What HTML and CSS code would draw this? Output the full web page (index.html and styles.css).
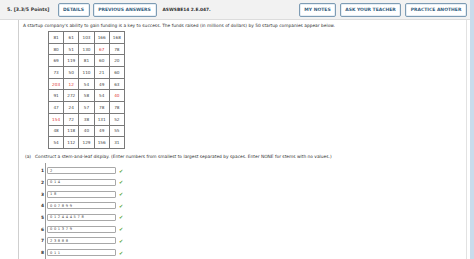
FILE: index.html
```html
<!DOCTYPE html>
<html>
<head>
<meta charset="utf-8">
<link rel="stylesheet" href="styles.css">
</head>
<body>
<div class="page">
  <div class="main">
    <div class="header">
      <span class="qnum">5. [3.3/5 Points]</span>
      <span class="btn btn-details">DETAILS</span>
      <span class="btn btn-prev">PREVIOUS ANSWERS</span>
      <span class="code">ASWSBE14 2.E.047.</span>
      <span class="spacer"></span>
      <span class="btn btn-notes">MY NOTES</span>
      <span class="btn btn-ask">ASK YOUR TEACHER</span>
      <span class="btn btn-practice">PRACTICE ANOTHER</span>
    </div>
    <div class="content">
      <p class="intro">A startup company's ability to gain funding is a key to success. The funds raised (in millions of dollars) by 50 startup companies appear below.</p>
      <table class="data">
        <tr><td>81</td><td>61</td><td>103</td><td>166</td><td>168</td></tr>
        <tr><td>80</td><td>51</td><td>130</td><td class="red">67</td><td>78</td></tr>
        <tr><td>69</td><td>119</td><td>81</td><td>60</td><td>20</td></tr>
        <tr><td>73</td><td>50</td><td>110</td><td>21</td><td>60</td></tr>
        <tr><td class="red">203</td><td class="red">12</td><td>54</td><td>49</td><td>63</td></tr>
        <tr><td>91</td><td>272</td><td>58</td><td>54</td><td class="red">40</td></tr>
        <tr><td>47</td><td>24</td><td>57</td><td>78</td><td>78</td></tr>
        <tr><td class="red">154</td><td>72</td><td>38</td><td>131</td><td>52</td></tr>
        <tr><td>48</td><td>118</td><td>40</td><td>49</td><td>55</td></tr>
        <tr><td>54</td><td>112</td><td>129</td><td>156</td><td>31</td></tr>
      </table>
      <p class="part"><span class="plabel">(a)</span>Construct a stem-and-leaf display. (Enter numbers from smallest to largest separated by spaces. Enter NONE for stems with no values.)</p>
      <div class="stemleaf">
        <div class="stems">
          <div class="stem">1</div>
          <div class="stem">2</div>
          <div class="stem">3</div>
          <div class="stem">4</div>
          <div class="stem">5</div>
          <div class="stem">6</div>
          <div class="stem">7</div>
          <div class="stem">8</div>
        </div>
        <div class="leaves">
          <div class="leaf"><span class="box">2</span><span class="check">&#10004;</span></div>
          <div class="leaf"><span class="box">0 1 4</span><span class="check">&#10004;</span></div>
          <div class="leaf"><span class="box">1 8</span><span class="check">&#10004;</span></div>
          <div class="leaf"><span class="box">0 0 7 8 9 9</span><span class="check">&#10004;</span></div>
          <div class="leaf"><span class="box">0 1 2 4 4 4 5 7 8</span><span class="check">&#10004;</span></div>
          <div class="leaf"><span class="box">0 0 1 3 7 9</span><span class="check">&#10004;</span></div>
          <div class="leaf"><span class="box">2 3 8 8 8</span><span class="check">&#10004;</span></div>
          <div class="leaf"><span class="box">0 1 1</span><span class="check">&#10004;</span></div>
        </div>
      </div>
    </div>
  </div>
  <div class="sidebar"></div>
</div>
</body>
</html>
```
FILE: styles.css
```css
html, body {
  margin: 0;
  padding: 0;
  background: #ffffff;
}
body {
  font-family: "DejaVu Sans", Verdana, sans-serif;
  font-size: 4.37px;
  color: #333333;
  width: 474px;
  height: 259px;
  overflow: hidden;
}
.page {
  display: flex;
  height: 259px;
}
.main {
  width: 470px;
  display: flex;
  flex-direction: column;
  min-height: 0;
}
.sidebar {
  width: 4px;
  background: #c9dcec;
}
.header {
  flex-shrink: 0;
  height: 19px;
  background: #f2f2f2;
  border-bottom: 1px solid #dcdcdc;
  display: flex;
  align-items: center;
  padding: 0 3px 0 7px;
}
.qnum {
  font-weight: bold;
  font-size: 4.7px;
  color: #333;
  margin-right: 8px;
}
.btn {
  box-sizing: border-box;
  height: 14px;
  display: flex;
  align-items: center;
  justify-content: center;
  background: #ffffff;
  border: 1px solid #7e9cb4;
  border-radius: 2px;
  box-shadow: inset 0 0 0 1px #e6eef5;
  color: #345d7e;
  font-weight: bold;
  font-size: 4.5px;
  white-space: nowrap;
}
.btn-details { width: 32px; }
.btn-prev { width: 64px; margin-left: 3px; }
.btn-notes { width: 37px; }
.btn-ask { width: 61px; margin-left: 4px; }
.btn-practice { width: 62px; margin-left: 4px; }
.code {
  font-weight: bold;
  font-size: 4.35px;
  color: #333;
  margin-left: 6px;
}
.spacer { flex: 1; }
.content {
  flex: 1;
  min-height: 0;
  overflow: hidden;
  margin-left: 18px;
  margin-right: 3px;
  border-left: 1px solid #cfcfcf;
  border-right: 1px solid #e2e2e2;
  padding: 3px 0 0 4px;
}
.intro {
  margin: 0;
  line-height: 5px;
}
table.data {
  border-collapse: collapse;
  margin: 3px 0 0 25px;
}
table.data td {
  border: 1px solid #7a7a7a;
  width: 14.2px;
  height: 10.7px;
  padding: 0;
  text-align: center;
  font-size: 4.2px;
  color: #444;
}
table.data td.red { color: #e03333; }
.part {
  margin: 5px 0 0 2px;
  line-height: 6px;
}
.plabel { margin-right: 4px; }
.stemleaf {
  display: flex;
  margin-top: 3px;
  margin-left: 16px;
}
.stems {
  width: 6px;
  padding-top: 2px;
}
.stem {
  height: 11.7px;
  display: flex;
  align-items: center;
  justify-content: flex-end;
  padding-right: 1px;
  font-weight: bold;
  color: #333;
}
.leaves {
  border-left: 1px solid #999999;
  padding: 2px 0 4px 1px;
}
.leaf {
  height: 11.7px;
  display: flex;
  align-items: center;
}
.box {
  box-sizing: border-box;
  width: 69px;
  height: 7px;
  border: 1px solid #a8a8a8;
  border-radius: 1px;
  display: flex;
  align-items: center;
  padding-left: 2px;
  font-size: 3.6px;
  color: #444;
  word-spacing: 0.5px;
}
.check {
  margin-left: 3px;
  color: #5aa43a;
  font-size: 5px;
}
```
